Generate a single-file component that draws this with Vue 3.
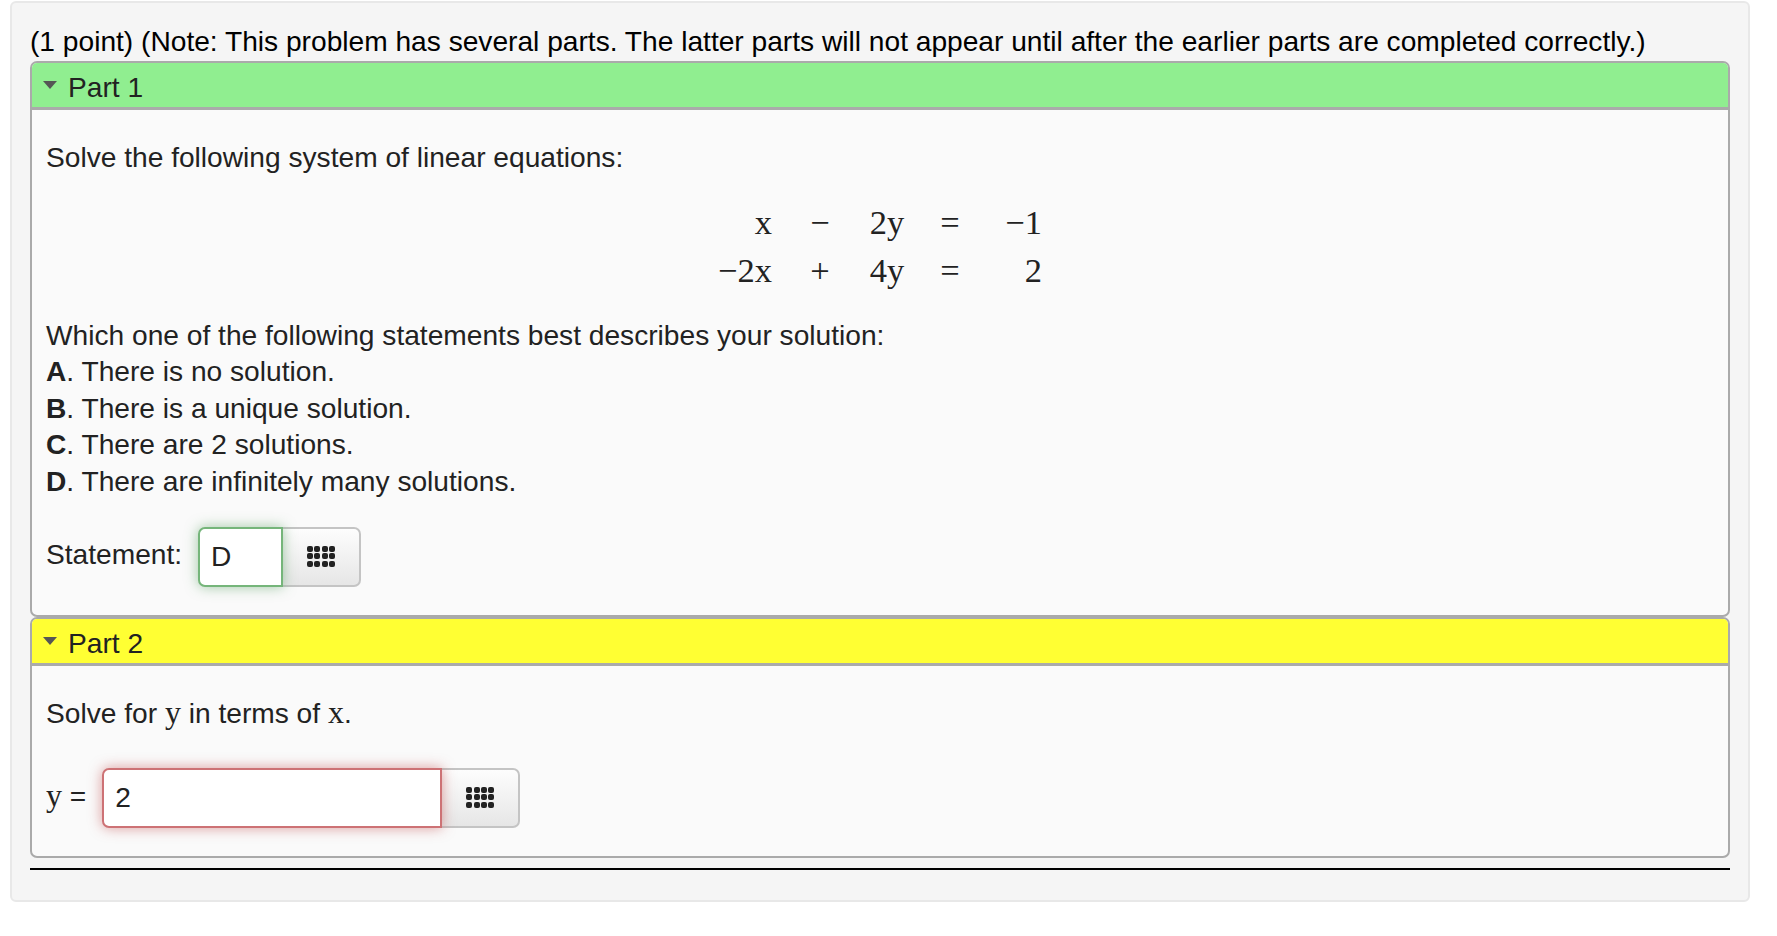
<script setup>
const choices = [
  ['A', 'There is no solution.'],
  ['B', 'There is a unique solution.'],
  ['C', 'There are 2 solutions.'],
  ['D', 'There are infinitely many solutions.']
]
const rows = [
  ['x', '−', '2y', '=', '−1'],
  ['−2x', '+', '4y', '=', '2']
]
const dots = [0, 1, 2, 3, 4, 5, 6, 7, 8, 9, 10, 11]
</script>

<template>
  <div class="page">
    <div class="well">
      <p class="intro">(1 point) (Note: This problem has several parts. The latter parts will not appear until after the earlier parts are completed correctly.)</p>

      <section class="part">
        <h3 class="part__head part__head--done"><span class="caret"></span>Part 1</h3>
        <div class="part__body part__body--one">
          <p class="line">Solve the following system of linear equations:</p>
          <div class="system">
            <template v-for="(row, i) in rows" :key="i">
              <span v-for="(cell, j) in row" :key="j" class="system__cell">{{ cell }}</span>
            </template>
          </div>
          <p class="line">Which one of the following statements best describes your solution:</p>
          <p v-for="c in choices" :key="c[0]" class="line"><b>{{ c[0] }}</b>. {{ c[1] }}</p>
          <div class="answer answer--first">
            <span class="answer__label">Statement:</span>
            <div class="field field--ok field--short">D</div>
            <button class="picker">
              <span class="picker__grid"><i v-for="d in dots" :key="d"></i></span>
            </button>
          </div>
        </div>
      </section>

      <section class="part part--second">
        <h3 class="part__head part__head--open"><span class="caret"></span>Part 2</h3>
        <div class="part__body part__body--two">
          <p class="line">Solve for <span class="math">y</span> in terms of <span class="math">x</span>.</p>
          <div class="answer answer--second">
            <span class="answer__label"><span class="math">y</span> =</span>
            <div class="field field--bad field--long">2</div>
            <button class="picker">
              <span class="picker__grid"><i v-for="d in dots" :key="d"></i></span>
            </button>
          </div>
        </div>
      </section>

      <hr class="rule" />
    </div>
  </div>
</template>

<style>
html, body {
  background: #fff;
}
</style>

<style scoped>
.page {
  width: 1777px;
  height: 936px;
  padding: 1px 0 0 10px;
  box-sizing: border-box;
  font-family: "Liberation Sans", Arial, sans-serif;
  color: #222;
  font-size: 28.15px;
  line-height: 36.5px;
}

.well {
  width: 1740px;
  height: 901px;
  box-sizing: border-box;
  padding: 21px 18px 0 18px;
  background: #f5f5f5;
  border: 2px solid #e8e8e8;
  border-radius: 6px;
}

p {
  margin: 0;
}

.intro {
  color: #000;
  height: 37px;
  white-space: nowrap;
}

.part {
  border: 2.5px solid #aaa;
  border-radius: 7px;
  background: #fafafa;
  overflow: hidden;
}

.part__head {
  margin: 0;
  height: 47px;
  padding-top: 7px;
  box-sizing: border-box;
  display: flex;
  align-items: center;
  font-size: 28.15px;
  font-weight: 400;
  border-bottom: 3px solid #aaa;
}

.part__head--done {
  background: #90ee90;
}

.part__head--open {
  background: #ffff33;
}

.caret {
  width: 0;
  height: 0;
  margin: 0 11px 7px 11px;
  border-left: 7px solid transparent;
  border-right: 7px solid transparent;
  border-top: 8px solid #555;
}

.part__body {
  padding: 30px 14px 0;
  box-sizing: border-box;
}

.part__body--one {
  height: 505px;
}

.part__body--two {
  height: 189.5px;
  padding-top: 28px;
}

.line {
  white-space: nowrap;
}

.math,
.system {
  font-family: "Liberation Serif", "Times New Roman", serif;
}

.system {
  display: grid;
  grid-template-columns: 58px 96px 38px 88px 48px;
  grid-auto-rows: 48px;
  align-items: center;
  margin: 22px 0 23px 668px;
  font-size: 34.5px;
}

.system__cell {
  text-align: center;
}

.system__cell:nth-child(5n + 1),
.system__cell:nth-child(5n) {
  text-align: right;
}

.math {
  font-size: 32px;
}

.answer {
  display: flex;
  align-items: center;
}

.answer--first {
  margin-top: 27px;
}

.answer--second {
  margin-top: 35.5px;
}

.answer__label {
  margin-right: 16px;
  padding-bottom: 4px;
  white-space: nowrap;
}

.field {
  height: 60px;
  box-sizing: border-box;
  padding: 0 11px;
  display: flex;
  align-items: center;
  background: #fff;
  border: 2px solid;
  border-radius: 7px 0 0 7px;
  position: relative;
  z-index: 1;
}

.field--short {
  width: 85px;
}

.field--long {
  width: 340px;
}

.field--ok {
  border-color: #75b57a;
  box-shadow: 0 0 13px rgba(70, 150, 80, 0.5);
}

.field--bad {
  border-color: #cd7275;
  box-shadow: 0 0 13px rgba(190, 60, 60, 0.5);
}

.picker {
  width: 78px;
  height: 60px;
  padding: 0;
  display: flex;
  align-items: center;
  justify-content: center;
  background: linear-gradient(#fdfdfd, #e6e6e6);
  border: 2px solid #c4c4c4;
  border-left: 0;
  border-radius: 0 7px 7px 0;
}

.picker__grid {
  display: grid;
  grid-template-columns: repeat(4, 6px);
  grid-auto-rows: 6px;
  column-gap: 1.33px;
  row-gap: 1.5px;
  margin-bottom: 2px;
}

.picker__grid i {
  background: #222;
  border-radius: 2px;
}

.rule {
  margin: 10px 0 0;
  height: 2px;
  border: 0;
  background: #000;
}
</style>
